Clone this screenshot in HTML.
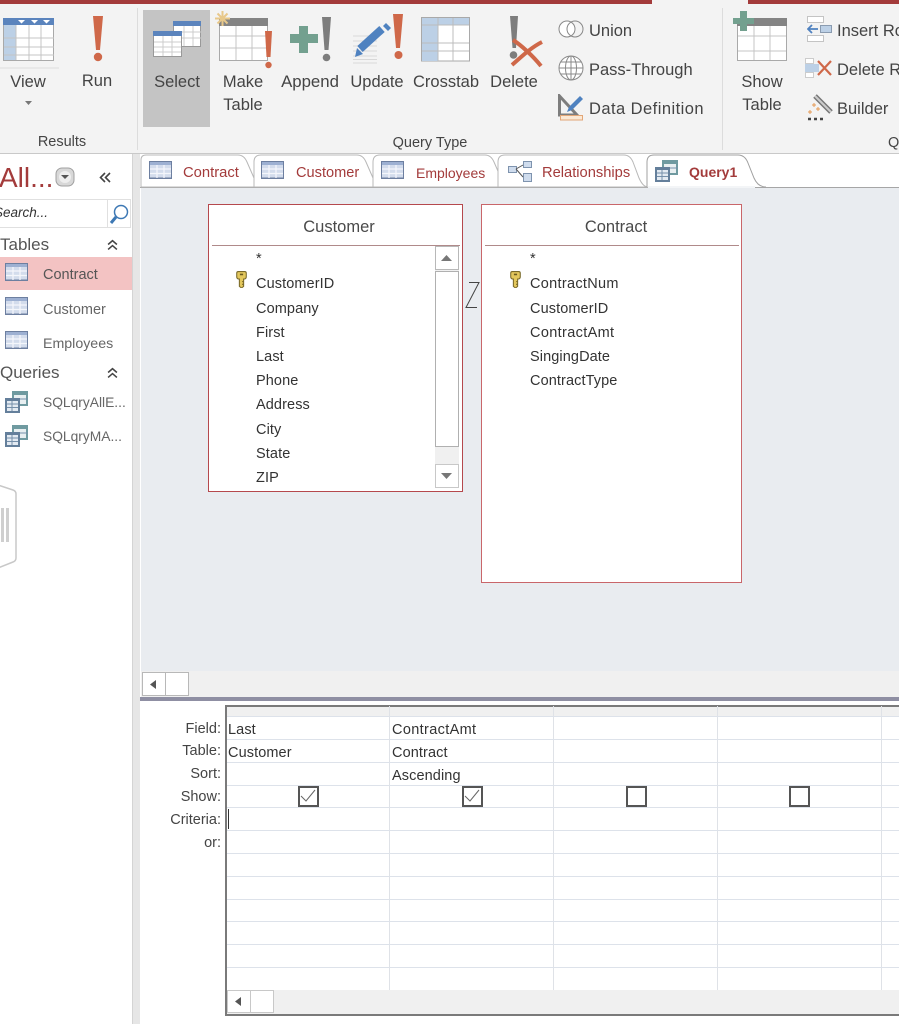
<!DOCTYPE html>
<html><head><meta charset="utf-8"><style>
html,body{margin:0;padding:0;width:899px;height:1024px;overflow:hidden;background:#fff}
body{position:relative;font-family:"Liberation Sans",sans-serif;color:#444}
div,span.t,svg{position:absolute}
.t{position:absolute;white-space:nowrap;font-size:16px;line-height:20px}
.c{transform:translateX(-50%)}
.r{color:#a33b3b;font-size:15px}
.g{color:#666;font-size:15px}
.f{color:#333;font-size:15px}
.q{color:#333;font-size:14.5px;letter-spacing:.1px}
.l{text-align:right;left:140px;width:81px;color:#444;font-size:14.5px}
.h{height:1px;left:227px;width:672px;background:#dde2ea}
.v{width:1px;top:706px;height:284px;background:#dfe2e7}
.cb{width:17px;height:17px;border:2px solid #555;background:#fff;top:786px}
</style></head><body>
<svg width="0" height="0" style="position:absolute"><defs>
<symbol id="tb" viewBox="0 0 23 18"><rect width="23" height="18" fill="#6d7fa0"/><rect x="1" y="1" width="21" height="15.500" fill="#d3dcec"/><path d="M1 1h21v3H1z" fill="#9db0d2"/><path d="M1 8h21M1 12.500h21M8 4v13M15 4v13" stroke="#f4f6fb" stroke-width="1.300"/></symbol>
<symbol id="qy" viewBox="0 0 23 22"><rect x="7" y="0" width="16" height="15" fill="#6f9aa0"/><rect x="9" y="4" width="12" height="9" fill="#e8eff1"/><rect x="0" y="7" width="15" height="15" fill="#647f9b"/><rect x="2" y="10" width="11" height="10" fill="#e3eaf2"/><path d="M2 13h11M2 16.500h11M7 10v10M15 8h8" stroke="#7690aa"/></symbol>
<symbol id="key" viewBox="0 0 10 16"><path d="M2 .5h6q1.500 0 1.500 1.500v3.500q0 1.500-1.500 2H7v7l-2 1.500L3 14.500v-7H2Q.5 7 .5 5.500V2Q.5.5 2 .5z" fill="#e3c75c" stroke="#7a6a2a"/><rect x="3.500" y="2.500" width="3" height="1.500" fill="#6b5a20"/><path d="M7 10H5.500M7 12.500H5.500" stroke="#7a6a2a"/></symbol>
<symbol id="chev" viewBox="0 0 10 10"><path d="M1 5l4-3.500L9 5M1 9.500L5 6l4 3.500" fill="none" stroke="#444" stroke-width="1.400"/></symbol>
</defs></svg>

<!-- ribbon -->
<div style="left:0;top:0;width:899px;height:153px;background:#f3f3f3"></div>
<div style="left:0;top:0;width:652px;height:4px;background:#a33b3b"></div>
<div style="left:748px;top:0;width:151px;height:4px;background:#a33b3b"></div>
<div style="left:0;top:153px;width:899px;height:1px;background:#c9c9c9"></div>
<div style="left:137px;top:8px;width:1px;height:142px;background:#dcdcdc"></div>
<div style="left:722px;top:8px;width:1px;height:142px;background:#dcdcdc"></div>
<div style="left:143px;top:10px;width:67px;height:117px;background:#c4c4c4"></div>
<div style="left:0;top:67px;width:59px;height:2px;background:#e8e8e8"></div>

<!-- View -->
<svg style="left:3px;top:18px" width="52" height="44"><rect x=".5" y=".5" width="50" height="42" fill="#fff" stroke="#a9a9a9"/><rect x="1" y="7" width="12" height="35" fill="#bcd0e6"/><rect x="0" y="0" width="51" height="7" fill="#5b84bd"/><path d="M1 20h50M1 29h50M1 37h50M13 7v35M26 7v35M38 7v35" stroke="#c4c4c4"/><path d="M15 2h7l-3.500 3.500zM28 2h7l-3.500 3.500zM40 2h7l-3.500 3.500z" fill="#fff"/></svg>
<span class="t c" style="left:28px;top:72px;font-size:16.500px">View</span>
<svg style="left:25px;top:101px" width="8" height="5"><path d="M0 0h7L3.500 4z" fill="#777"/></svg>
<!-- Run -->
<svg style="left:90px;top:14px" width="16" height="48"><path d="M3 2h10l-3 34H6z" fill="#cf6849"/><circle cx="8" cy="43" r="4.200" fill="#cf6849"/></svg>
<span class="t c" style="left:97px;top:71px;font-size:16.500px">Run</span>
<span class="t c" style="left:62px;top:132px;font-size:14.500px">Results</span>
<!-- Select -->
<svg style="left:152px;top:20px" width="50" height="38"><rect x="21.500" y="1.500" width="27" height="25" fill="#fff" stroke="#999"/><rect x="21" y="1" width="28" height="5" fill="#5b84bd"/><path d="M22 12h27M22 18h27M32 6v20M41 6v20" stroke="#ccc"/><rect x="1.500" y="11.500" width="28" height="25" fill="#fff" stroke="#999"/><rect x="1" y="11" width="29" height="5" fill="#5b84bd"/><path d="M2 22h27M2 27h27M2 32h27M11 16v20M20 16v20" stroke="#ccc"/></svg>
<span class="t c" style="left:177px;top:72px;font-size:16.500px">Select</span>
<!-- Make Table -->
<svg style="left:214px;top:10px" width="62" height="60"><rect x="5.500" y="9.500" width="48" height="41" fill="#fff" stroke="#a9a9a9"/><rect x="5" y="8" width="49" height="8" fill="#848484"/><path d="M6 26h47M6 38h47M22 16v34M38 16v34" stroke="#c4c4c4"/><path d="M8.500 1v15M1 8.500h15M3.500 3.500l10 10M13.500 3.500l-10 10" stroke="#e8c88a" stroke-width="2"/><path d="M51 21h7l-1.500 26h-4z" fill="#cf6849"/><circle cx="54.500" cy="55" r="3.200" fill="#cf6849"/></svg>
<span class="t c" style="left:243px;top:72px;font-size:16.500px">Make</span>
<span class="t c" style="left:243px;top:95px;font-size:16.500px">Table</span>
<!-- Append -->
<svg style="left:289px;top:15px" width="46" height="48"><path d="M10 11h9v8h10v9H19v10h-9V28H1v-9h9z" fill="#73a08f"/><path d="M33 2h9l-2.500 33h-4z" fill="#7d7d7d"/><circle cx="37.500" cy="42.500" r="3.800" fill="#7d7d7d"/></svg>
<span class="t c" style="left:310px;top:72px;font-size:16.800px">Append</span>
<!-- Update -->
<svg style="left:352px;top:12px" width="54" height="56"><path d="M1 24h24M1 29h24M1 34h24M1 39h24M1 44h24M1 47.500h24M1 51h24" stroke="#d8d8d8"/><path d="M8 37L30 17" stroke="#4f82c0" stroke-width="8"/><path d="M31 14l3-3 5 5-3 3z" fill="#4f82c0"/><path d="M3 45l2-9 6 6z" fill="#4f82c0"/><path d="M41 2h10l-3 34h-4z" fill="#cf6849"/><circle cx="46.500" cy="43" r="4" fill="#cf6849"/></svg>
<span class="t c" style="left:377px;top:72px;font-size:16.500px">Update</span>
<!-- Crosstab -->
<svg style="left:421px;top:17px" width="49" height="45"><rect x=".5" y=".5" width="48" height="43.500" fill="#fff" stroke="#a9a9a9"/><rect x="1" y="1" width="16" height="43" fill="#bcd0e6"/><rect x="17" y="1" width="31" height="7" fill="#bcd0e6"/><path d="M1 8h47M1 26h47M1 34h47M17 1v43M32 1v43" stroke="#bcbcbc"/></svg>
<span class="t c" style="left:446px;top:72px;font-size:16.500px">Crosstab</span>
<!-- Delete -->
<svg style="left:508px;top:15px" width="36" height="54"><path d="M2 1h8L8 33H4.500z" fill="#7d7d7d"/><circle cx="5.500" cy="40" r="3.800" fill="#7d7d7d"/><path d="M5 25c8 5 20 16 28 26M34 27C22 33 11 44 4 50" fill="none" stroke="#cf6849" stroke-width="4"/></svg>
<span class="t c" style="left:514px;top:72px;font-size:16.500px">Delete</span>
<!-- small -->
<svg style="left:558px;top:20px" width="27" height="18" fill="#fff" stroke="#888"><circle cx="9" cy="9" r="8"/><circle cx="17" cy="9" r="8" fill="none"/></svg>
<span class="t" style="left:589px;top:21px;font-size:16.500px">Union</span>
<svg style="left:558px;top:55px" width="26" height="26" fill="none" stroke="#8a8a8a"><circle cx="13" cy="13" r="12" fill="#fff"/><ellipse cx="13" cy="13" rx="5.500" ry="12"/><path d="M1 13h24M3 7h20M3 19h20M13 1v24"/></svg>
<span class="t" style="left:589px;top:60px;font-size:16.500px">Pass-Through</span>
<svg style="left:558px;top:94px" width="27" height="28"><path d="M1.500 2L19 21H1.500z" fill="none" stroke="#7d7d7d" stroke-width="3"/><path d="M9 18l2-5L22 2l3 3-11 11z" fill="#4f82c0"/><rect x="2.500" y="21.500" width="22" height="4.500" fill="#fbe8d4" stroke="#e2a677"/></svg>
<span class="t" style="left:589px;top:99px;font-size:16.500px;letter-spacing:.45px">Data Definition</span>
<span class="t c" style="left:430px;top:133px;font-size:14.500px">Query Type</span>
<!-- Show Table -->
<svg style="left:733px;top:10px" width="55" height="52"><rect x="4.500" y="8.500" width="49" height="42" fill="#fff" stroke="#a9a9a9"/><rect x="4" y="8" width="50" height="8" fill="#848484"/><path d="M5 26h48M5 41h48M21 16v34M37 16v34" stroke="#c4c4c4"/><path d="M7 1h7v7h7v6h-7v7H7v-7H0V8h7z" fill="#73a08f"/></svg>
<span class="t c" style="left:762px;top:72px;font-size:16.500px">Show</span>
<span class="t c" style="left:762px;top:95px;font-size:16.500px">Table</span>
<svg style="left:807px;top:16px" width="26" height="26"><rect x=".5" y=".5" width="16" height="6" fill="#fff" stroke="#c4c4c4"/><rect x=".5" y="19.500" width="16" height="6" fill="#fff" stroke="#c4c4c4"/><rect x="13.500" y="9.500" width="11" height="7" fill="#bcd0e6" stroke="#8a9bb0"/><path d="M11 13H2M5 9l-4 4 4 4" fill="none" stroke="#4f82c0" stroke-width="1.800"/></svg>
<span class="t" style="left:837px;top:21px;font-size:16.500px">Insert Rows</span>
<svg style="left:805px;top:58px" width="28" height="20"><rect x=".5" y=".5" width="8" height="5" fill="#fff" stroke="#ccc"/><rect x=".5" y="14.500" width="8" height="5" fill="#fff" stroke="#ccc"/><rect x="0" y="6" width="14" height="8" fill="#bcd0e6"/><path d="M13 3l13 14M26 3L13 17" stroke="#cf6849" stroke-width="2.200"/></svg>
<span class="t" style="left:837px;top:60px;font-size:16.500px">Delete Rows</span>
<svg style="left:806px;top:94px" width="27" height="27"><path d="M9 2l16 16" stroke="#777" stroke-width="5"/><path d="M9 2l16 16" stroke="#ccc" stroke-width="2"/><path d="M6 11h4M8 9v4M2 18h4M4 16v4M10 15h4M12 13v4" stroke="#e59a55"/><path d="M2 25h3M8 25h3M14 25h3" stroke="#444" stroke-width="2.500"/></svg>
<span class="t" style="left:837px;top:99px;font-size:16.500px">Builder</span>
<span class="t" style="left:888px;top:133px;font-size:14.500px">Query</span>

<!-- navigation pane -->
<span class="t" style="left:-1px;top:160px;font-size:28px;line-height:36px;color:#a33b3b">All...</span>
<svg style="left:55px;top:167px" width="20" height="20"><rect x="1" y="1" width="18" height="18" rx="6" fill="#d8d8d8" stroke="#a0a0a0"/><circle cx="10" cy="10" r="6" fill="#eee"/><path d="M6 8h8l-4 4z" fill="#555"/></svg>
<svg style="left:99px;top:172px" width="12" height="11" fill="none" stroke="#444" stroke-width="1.600"><path d="M6 1L1.500 5.500 6 10M11 1L6.500 5.500 11 10"/></svg>
<div style="left:0;top:199px;width:131px;height:29px;box-sizing:border-box;border:1px solid #e0e0e0;border-left:0;background:#fff"></div>
<div style="left:107px;top:200px;width:1px;height:27px;background:#e0e0e0"></div>
<span class="t" style="left:-6px;top:203px;font-size:13.500px;font-style:italic;color:#333">Search...</span>
<svg style="left:108px;top:202px" width="22" height="24" fill="none" stroke="#3d78b4"><circle cx="13" cy="10" r="6.500" stroke-width="1.500"/><path d="M8 15l-5 6" stroke-width="3"/></svg>
<span class="t" style="left:0;top:235px;font-size:17px;color:#555">Tables</span>
<svg style="left:107px;top:239px" width="11" height="11"><use href="#chev"/></svg>
<div style="left:0;top:257px;width:132px;height:33px;background:#f3c3c3"></div>
<svg style="left:5px;top:263px" width="23" height="18"><use href="#tb"/></svg>
<span class="t g" style="left:43px;top:265px;color:#555;font-size:14.500px">Contract</span>
<svg style="left:5px;top:297px" width="23" height="18"><use href="#tb"/></svg>
<span class="t g" style="left:43px;top:300px;font-size:14.500px">Customer</span>
<svg style="left:5px;top:331px" width="23" height="18"><use href="#tb"/></svg>
<span class="t g" style="left:43px;top:334px;font-size:14.200px">Employees</span>
<span class="t" style="left:0;top:363px;font-size:17px;color:#555">Queries</span>
<svg style="left:107px;top:367px" width="11" height="11"><use href="#chev"/></svg>
<svg style="left:5px;top:391px" width="23" height="22"><use href="#qy"/></svg>
<span class="t g" style="left:43px;top:393px;font-size:13.800px">SQLqryAllE...</span>
<svg style="left:5px;top:425px" width="23" height="22"><use href="#qy"/></svg>
<span class="t g" style="left:43px;top:427px;font-size:13.800px">SQLqryMA...</span>
<svg style="left:0;top:484px" width="18" height="86"><path d="M-2 1L13 6q3 1 3 4v64q0 3-3 4L-2 84" fill="#fff" stroke="#c8c8c8" stroke-width="1.500"/><rect x="1" y="24" width="3" height="34" fill="#cfcfcf"/><rect x="6" y="24" width="3" height="34" fill="#cfcfcf"/></svg>
<div style="left:132px;top:154px;width:8px;height:870px;background:#e6e6e6;border-left:1px solid #d4d4d4;box-sizing:border-box"></div>

<!-- tabs -->
<div style="left:140px;top:154px;width:759px;height:33px;background:#fff"></div>
<div style="left:140px;top:187px;width:759px;height:1px;background:#a6a6a6"></div>
<svg style="left:140px;top:154px" width="759" height="34" fill="#fff" stroke="#b8b8b8"><path d="M1 33V6q0-5 5-5h92q6 0 9 7l7 16q4 9 12 9z"/><path d="M114 33V8q0-7 7-7h96q6 0 9 7l7 16q4 9 12 9z"/><path d="M233 33V8q0-7 7-7h105q6 0 9 7l7 16q4 9 12 9z"/><path d="M358 33V8q0-7 7-7h119q6 0 9 7l6 16q4 9 9 9z"/><path d="M507 33V8q0-7 7-7h84q7 0 10 8l6 15q4 9 12 9" stroke="#a0a0a0"/></svg>
<div style="left:648px;top:186px;width:107px;height:3px;background:#f3f5f7"></div>
<svg style="left:149px;top:161px" width="23" height="18"><use href="#tb"/></svg>
<span class="t r" style="left:183px;top:163px;font-size:14.800px">Contract</span>
<svg style="left:261px;top:161px" width="23" height="18"><use href="#tb"/></svg>
<span class="t r" style="left:296px;top:163px;font-size:14.600px">Customer</span>
<svg style="left:381px;top:161px" width="23" height="18"><use href="#tb"/></svg>
<span class="t r" style="left:416px;top:163px;font-size:14px">Employees</span>
<svg style="left:508px;top:161px" width="24" height="22"><rect x=".5" y="5.500" width="8" height="6" fill="#cfdced" stroke="#7e93ae"/><rect x="15.500" y=".5" width="8" height="6" fill="#cfdced" stroke="#7e93ae"/><rect x="15.500" y="12.500" width="8" height="8" fill="#cfdced" stroke="#7e93ae"/><path d="M8 8l7-4M8 8l7 8" stroke="#555"/></svg>
<span class="t r" style="left:542px;top:163px;font-size:14.700px">Relationships</span>
<svg style="left:655px;top:160px" width="23" height="22"><use href="#qy"/></svg>
<span class="t r" style="left:689px;top:162px;font-size:14px;font-weight:bold">Query1</span>

<!-- design area -->
<div style="left:141px;top:188px;width:758px;height:510px;background:#e9ecf0"></div>
<!-- Customer table -->
<div style="left:208px;top:204px;width:255px;height:288px;box-sizing:border-box;border:1px solid #b5484d;background:#fff"></div>
<div style="left:212px;top:245px;width:248px;height:1px;background:#b08a8a"></div>
<span class="t c" style="left:339px;top:217px;font-size:16.500px;color:#4a4a4a">Customer</span>
<span class="t q" style="left:256px;top:249px">*</span>
<svg style="left:236px;top:271px" width="11" height="17"><use href="#key"/></svg>
<span class="t q" style="left:256px;top:274px">CustomerID</span>
<span class="t q" style="left:256px;top:299px">Company</span>
<span class="t q" style="left:256px;top:323px">First</span>
<span class="t q" style="left:256px;top:347px">Last</span>
<span class="t q" style="left:256px;top:371px">Phone</span>
<span class="t q" style="left:256px;top:395px">Address</span>
<span class="t q" style="left:256px;top:420px">City</span>
<span class="t q" style="left:256px;top:444px">State</span>
<span class="t q" style="left:256px;top:468px">ZIP</span>
<!-- scroll -->
<div style="left:435px;top:246px;width:24px;height:242px;background:#f0f0f0"></div>
<div style="left:435px;top:246px;width:24px;height:24px;box-sizing:border-box;border:1px solid #b8b8b8;background:#fff"></div>
<div style="left:435px;top:271px;width:24px;height:176px;box-sizing:border-box;border:1px solid #b0b0b0;background:#fff"></div>
<div style="left:435px;top:464px;width:24px;height:24px;box-sizing:border-box;border:1px solid #c8c8c8;background:#fff"></div>
<svg style="left:441px;top:255px" width="12" height="7"><path d="M0 6h11L5.500 0z" fill="#777"/></svg>
<svg style="left:441px;top:473px" width="12" height="7"><path d="M0 0h11L5.500 6z" fill="#777"/></svg>
<!-- relation line -->
<svg style="left:464px;top:280px" width="16" height="30" fill="none" stroke="#444"><path d="M5 2.500h10L2 27.500h11"/></svg>
<!-- Contract table -->
<div style="left:481px;top:204px;width:261px;height:379px;box-sizing:border-box;border:1px solid #c9666a;background:#fff"></div>
<div style="left:485px;top:245px;width:254px;height:1px;background:#b08a8a"></div>
<span class="t c" style="left:616px;top:217px;font-size:16.500px;color:#4a4a4a">Contract</span>
<span class="t q" style="left:530px;top:249px">*</span>
<svg style="left:510px;top:271px" width="11" height="17"><use href="#key"/></svg>
<span class="t q" style="left:530px;top:274px;letter-spacing:.3px">ContractNum</span>
<span class="t q" style="left:530px;top:299px">CustomerID</span>
<span class="t q" style="left:530px;top:323px;letter-spacing:.35px">ContractAmt</span>
<span class="t q" style="left:530px;top:347px">SingingDate</span>
<span class="t q" style="left:530px;top:371px">ContractType</span>
<!-- upper hscroll -->
<div style="left:141px;top:671px;width:758px;height:26px;background:#f0f0f0"></div>
<div style="left:142px;top:672px;width:24px;height:24px;box-sizing:border-box;border:1px solid #b8b8b8;background:#fff"></div>
<div style="left:165px;top:672px;width:24px;height:24px;box-sizing:border-box;border:1px solid #b8b8b8;background:#fff"></div>
<svg style="left:150px;top:680px" width="7" height="10"><path d="M6 0v9L0 4.500z" fill="#555"/></svg>
<div style="left:140px;top:697px;width:759px;height:4px;background:#8f8fa3"></div>

<!-- grid -->
<div style="left:140px;top:701px;width:759px;height:323px;background:#fff"></div>
<div style="left:225px;top:705px;width:674px;height:2px;background:#7a7a7a"></div>
<div style="left:225px;top:705px;width:2px;height:310px;background:#7a7a7a"></div>
<div style="left:227px;top:707px;width:672px;height:10px;background:#f0f0f0"></div>
<div class="v" style="left:389px"></div><div class="v" style="left:553px"></div><div class="v" style="left:717px"></div><div class="v" style="left:881px"></div>
<div class="h" style="top:716px"></div><div class="h" style="top:739px"></div><div class="h" style="top:762px"></div><div class="h" style="top:785px"></div><div class="h" style="top:807px"></div><div class="h" style="top:830px"></div><div class="h" style="top:853px"></div><div class="h" style="top:876px"></div><div class="h" style="top:899px"></div><div class="h" style="top:921px"></div><div class="h" style="top:944px"></div><div class="h" style="top:967px"></div>
<span class="t l" style="top:719px">Field:</span>
<span class="t l" style="top:741px">Table:</span>
<span class="t l" style="top:764px">Sort:</span>
<span class="t l" style="top:787px">Show:</span>
<span class="t l" style="top:810px">Criteria:</span>
<span class="t l" style="top:833px">or:</span>
<span class="t q" style="left:228px;top:720px">Last</span>
<span class="t q" style="left:228px;top:743px">Customer</span>
<span class="t q" style="left:392px;top:720px;letter-spacing:.35px">ContractAmt</span>
<span class="t q" style="left:392px;top:743px">Contract</span>
<span class="t q" style="left:392px;top:766px">Ascending</span>
<div class="cb" style="left:298px"></div><div class="cb" style="left:462px"></div><div class="cb" style="left:626px"></div><div class="cb" style="left:789px"></div>
<svg style="left:300px;top:789px" width="16" height="14"><path d="M1 7l5 5L15 1" fill="none" stroke="#666"/></svg>
<svg style="left:464px;top:789px" width="16" height="14"><path d="M1 7l5 5L15 1" fill="none" stroke="#666"/></svg>
<div style="left:228px;top:809px;width:1px;height:20px;background:#333"></div>
<div style="left:227px;top:990px;width:672px;height:24px;background:#f0f0f0"></div>
<div style="left:227px;top:990px;width:24px;height:23px;box-sizing:border-box;border:1px solid #c8c8c8;background:#fff"></div>
<div style="left:250px;top:990px;width:24px;height:23px;box-sizing:border-box;border:1px solid #c8c8c8;background:#fff"></div>
<svg style="left:235px;top:997px" width="7" height="10"><path d="M6 0v9L0 4.500z" fill="#555"/></svg>
<div style="left:225px;top:1014px;width:674px;height:2px;background:#7a7a7a"></div>
</body></html>
